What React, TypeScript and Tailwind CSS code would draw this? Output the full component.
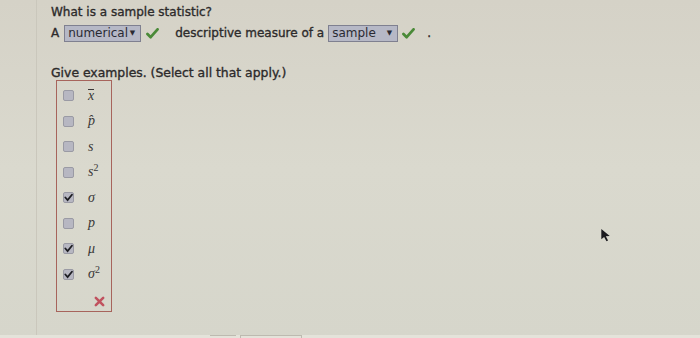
import React from 'react';

function Check({ className = '' }: { className?: string }) {
  return (
    <svg viewBox="0 0 14 12" className={className}>
      <path d="M1.5 6.5 L5 10 L12.5 1.5" fill="none" stroke="#4a8a38" strokeWidth="3" strokeLinecap="round" strokeLinejoin="round" />
    </svg>
  );
}

function Select({ value, width }: { value: string; width: string }) {
  return (
    <div className={`${width} h-[17px] flex items-center justify-between border border-[#7f8090] bg-[#b6b8c6] pl-[3px] pr-[5px] text-[12px] text-[#2a2a33]`}>
      <span>{value}</span>
      <span className="text-[7px]">▼</span>
    </div>
  );
}

function Box({ checked }: { checked: boolean }) {
  return (
    <div className="w-[11px] h-[11px] rounded-[2px] border border-[#9a9aa4] bg-[#b7b7c2] flex items-center justify-center">
      {checked && (
        <svg viewBox="0 0 10 10" className="w-[9px] h-[9px]">
          <path d="M1.5 5 L4 7.8 L8.8 2" fill="none" stroke="#1d1d22" strokeWidth="2" strokeLinecap="round" />
        </svg>
      )}
    </div>
  );
}

const options: { label: React.ReactNode; checked: boolean }[] = [
  { label: <span className="inline-block border-t border-[#3a3838] leading-[11px]">x</span>, checked: false },
  { label: 'p\u0302', checked: false },
  { label: 's', checked: false },
  { label: <span>s<sup className="not-italic text-[10px]">2</sup></span>, checked: false },
  { label: 'σ', checked: true },
  { label: 'p', checked: false },
  { label: 'μ', checked: true },
  { label: <span>σ<sup className="not-italic text-[10px]">2</sup></span>, checked: true },
];

export default function App() {
  return (
    <div className="relative w-[700px] h-[338px] overflow-hidden bg-gradient-to-b from-[#d5d2c7] via-[#dad9ce] to-[#d6d6cb] text-[#2c2a2a]" style={{ fontFamily: '"DejaVu Sans", Verdana, sans-serif' }}>
      <div className="ml-[36px] h-full border-l border-[#cac7bc] pl-[14px] pt-[4px]">
        <div className="text-[12px] leading-[17px] text-[#2d2b2b] [-webkit-text-stroke:0.35px_#2d2b2b]">What is a sample statistic?</div>
        <div className="mt-[3px] flex items-center text-[12px] text-[#2d2b2b]">
          <span className="[-webkit-text-stroke:0.35px_#2d2b2b]">A</span>
          <div className="ml-[5px]"><Select value="numerical" width="w-[77px]" /></div>
          <Check className="ml-[5px] w-[13px] h-[11px]" />
          <span className="ml-[16px] [-webkit-text-stroke:0.35px_#2d2b2b]">descriptive measure of a</span>
          <div className="ml-[4px]"><Select value="sample" width="w-[70px]" /></div>
          <Check className="ml-[4px] w-[13px] h-[11px]" />
          <span className="ml-[12px] [-webkit-text-stroke:0.35px_#2d2b2b]">.</span>
        </div>
        <div className="mt-[22px] text-[12.4px] leading-[17px] [-webkit-text-stroke:0.35px_#2c2a2a]">Give examples. (Select all that apply.)</div>
        <div className="-mt-[1px] ml-[5px] w-[56px] border border-[#a7645c] pt-[2px]">
          {options.map((o, i) => (
            <div key={i} className="h-[25.5px] flex items-center pl-[6px]">
              <Box checked={o.checked} />
              <span className="ml-[14px] text-[14px] leading-none italic text-[#3a3838]" style={{ fontFamily: '"Liberation Serif", "DejaVu Serif", serif' }}>{o.label}</span>
            </div>
          ))}
          <div className="h-[24px] flex items-center justify-end pr-[6px] pt-[4px]">
            <svg viewBox="0 0 12 12" className="w-[11px] h-[11px]">
              <path d="M2 2 L10 10 M10 2 L2 10" stroke="#c0525f" strokeWidth="2.8" strokeLinecap="round" />
            </svg>
          </div>
        </div>
      </div>
      <svg viewBox="0 0 12 16" className="absolute left-[600px] top-[228px] w-[12px] h-[15px]">
        <path d="M1 1 L1 12 L4 9.5 L6.5 14 L8.2 13.2 L5.8 8.8 L10 8.5 Z" fill="#1b1b1f" />
      </svg>
      <div className="absolute left-0 right-0 top-[335px] h-[3px] bg-[#e4e3da]">
        <div className="absolute left-[210px] w-[26px] top-0 h-full border-t border-[#bdbab0]" />
        <div className="absolute left-[240px] w-[62px] top-0 h-full border-t border-l border-r border-[#bdbab0]" />
      </div>
    </div>
  );
}
